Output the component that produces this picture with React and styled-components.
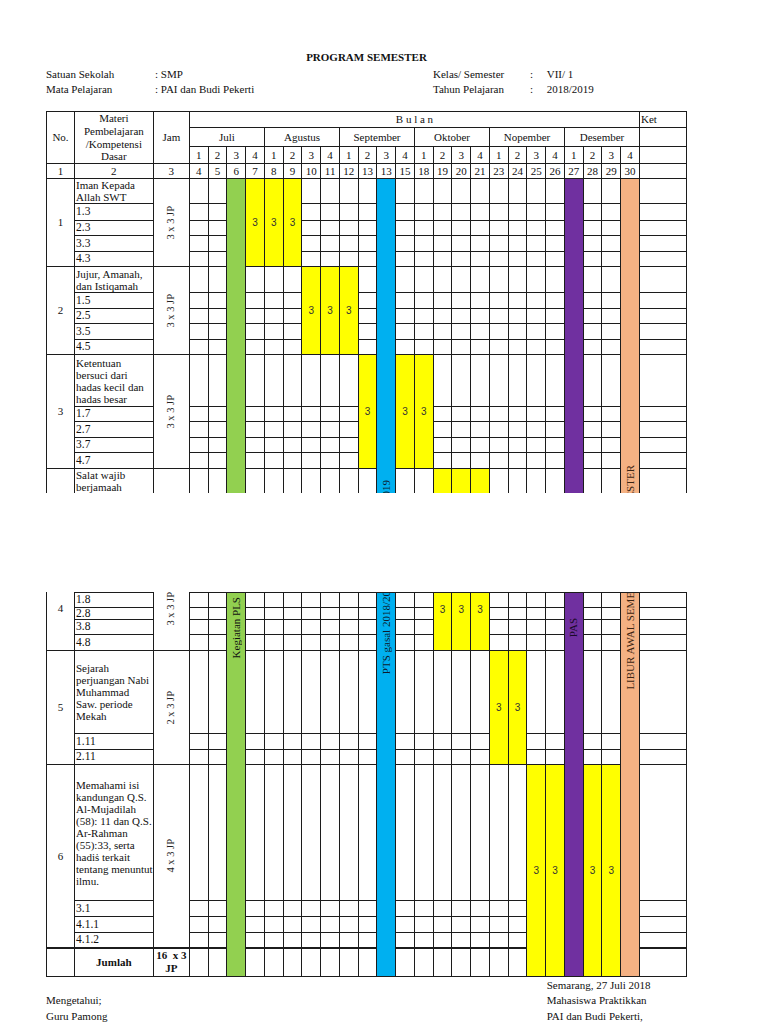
import React from "react";
import styled, { createGlobalStyle, css } from "styled-components";

const LINE = "#1c1c1c";

const MONTHS = ["Juli", "Agustus", "September", "Oktober", "Nopember", "Desember"];
const DATES = [4, 5, 6, 7, 8, 9, 10, 11, 12, 13, 13, 15, 18, 19, 20, 21, 23, 24, 25, 26, 27, 28, 29, 30];

const BANDS = [
  { week: 2, color: "#92d050", ink: "#111", label: "Kegiatan PLS" },
  { week: 10, color: "#00b0f0", ink: "#0d1b2c", label: "PTS gasal 2018/2019" },
  { week: 20, color: "#7030a0", ink: "#1a0a28", label: "PAS" },
  { week: 23, color: "#f4b183", ink: "#3a2412", label: "LIBUR AWAL SEMESTER" },
];
const bandWeeks = BANDS.map((b) => b.week);

// row track heights (px) for each printed page of the table
const PAGE1_ROWS = [15, 18, 16, 14, 24, 16, 14, 15, 14, 25, 15, 14, 15, 14, 51, 14, 15, 14, 15, 24];
const PAGE2_ROWS = [14, 11, 14, 15, 82, 15, 14, 135, 15, 15, 14, 28];

const spanHeight = (rows, from, to) =>
  rows.slice(from, to + 1).reduce((a, b) => a + b, 0) + (to - from);

const GROUPS = [
  {
    no: "1",
    title: ["Iman Kepada", "Allah SWT"],
    subs: ["1.3", "2.3", "3.3", "4.3"],
    jam: "3 x 3 JP",
    marks: [3, 4, 5],
  },
  {
    no: "2",
    title: ["Jujur, Amanah,", "dan Istiqamah"],
    subs: ["1.5", "2.5", "3.5", "4.5"],
    jam: "3 x 3 JP",
    marks: [6, 7, 8],
  },
  {
    no: "3",
    title: ["Ketentuan", "bersuci dari", "hadas kecil dan", "hadas besar"],
    subs: ["1.7", "2.7", "3.7", "4.7"],
    jam: "3 x 3 JP",
    marks: [9, 11, 12],
  },
  {
    no: "4",
    title: ["Salat wajib", "berjamaah"],
    subs: ["1.8", "2.8", "3.8", "4.8"],
    jam: "3 x 3 JP",
    marks: [13, 14, 15],
  },
  {
    no: "5",
    title: ["Sejarah", "perjuangan Nabi", "Muhammad", "Saw. periode", "Mekah"],
    subs: ["1.11", "2.11"],
    jam: "2 x 3 JP",
    marks: [16, 17],
  },
  {
    no: "6",
    title: [
      "Memahami  isi",
      "kandungan Q.S.",
      "Al-Mujadilah",
      "(58): 11 dan Q.S.",
      "Ar-Rahman",
      "(55):33, serta",
      "hadiṡ terkait",
      "tentang menuntut",
      "ilmu.",
    ],
    subs: ["3.1", "4.1.1", "4.1.2"],
    jam: "4 x 3 JP",
    marks: [18, 19, 21, 22],
  },
];

const GlobalStyle = createGlobalStyle`
  html, body { margin: 0; padding: 0; background: #fff; }
  body {
    font-family: "Liberation Serif", "Times New Roman", serif;
    font-size: 11px;
    color: #111;
  }
`;

const Sheet = styled.div`
  width: 768px;
  padding: 50px 0 0 46px;
  box-sizing: border-box;
`;

const Title = styled.div`
  width: 641px;
  text-align: center;
  font-weight: bold;
  line-height: 14px;
`;

const InfoBar = styled.div`
  display: flex;
  margin-top: 2px;
`;

const InfoBlock = styled.div`
  display: grid;
  grid-template-columns: ${(p) => p.$cols};
  grid-auto-rows: 15px;
  align-items: center;
  width: ${(p) => p.$width || "auto"};
  white-space: nowrap;
`;

const Table = styled.div`
  display: grid;
  grid-template-columns: 27px 77.7px 35.3px repeat(24, 17.75px) 46px;
  grid-template-rows: ${(p) => p.$rows};
  gap: 1px;
  padding: 1px 1px ${(p) => (p.$open ? 0 : 1)}px 1px;
  background: ${LINE};
  width: max-content;
  margin-top: ${(p) => p.$top}px;
`;

// grid placement taken from the table data
const place = css`
  grid-column: ${(p) => p.$col} / span ${(p) => p.$cols || 1};
  grid-row: ${(p) => p.$row} / span ${(p) => p.$rows || 1};
`;

const Cell = styled.div`
  ${place}
  background: ${(p) => p.$bg || "#fff"};
  overflow: hidden;
  display: flex;
  align-items: center;
  justify-content: ${(p) => (p.$left ? "flex-start" : "center")};
  padding-left: ${(p) => (p.$left ? 1 : 0)}px;
  text-align: center;
  line-height: 1.15;
  white-space: nowrap;
  font-weight: ${(p) => (p.$bold ? "bold" : "normal")};
  ${(p) => p.$noTop && "margin-top: -1px;"}
  ${(p) => p.$thick && `box-shadow: inset 0 1px 0 ${LINE};`}
`;

const ClipCell = styled(Cell)`
  align-items: flex-start;
`;

const HeadStack = styled.div`
  line-height: 12.6px;
`;

const TopicCell = styled.div`
  ${place}
  background: #fff;
  overflow: hidden;
  display: flex;
  flex-direction: column;
  justify-content: ${(p) => (p.$top ? "flex-start" : "center")};
  padding-left: 1px;
  line-height: 12px;
  white-space: nowrap;
`;

const LabelCell = styled.div`
  ${place}
  background: #fff;
  display: flex;
  align-items: center;
  padding-left: 1px;
  line-height: 1;
  font-size: 11.5px;
`;

const SliceBody = styled.div`
  flex: none;
  width: 100%;
  display: flex;
  align-items: center;
  justify-content: center;
`;

const Vertical = styled.span`
  writing-mode: vertical-rl;
  transform: rotate(180deg);
  white-space: nowrap;
  line-height: 1;
  font-size: ${(p) => p.$size || 11}px;
  color: ${(p) => p.$ink || "#111"};
`;

const MarkDigit = styled.span`
  font-family: "Liberation Sans", Arial, sans-serif;
  font-size: 10px;
  color: #333;
`;

const Footer = styled.div`
  display: grid;
  grid-template-columns: 500.7px auto;
  grid-auto-rows: 15.5px;
  align-items: center;
  white-space: nowrap;
`;

// a cell split over the page break shows its part of one taller virtual cell
function Slice({ total, offset, children }) {
  return <SliceBody style={{ height: total, marginTop: -offset }}>{children}</SliceBody>;
}

function headerCells() {
  const out = [
    <Cell key="no" $col={1} $row={1} $rows={3}>No.</Cell>,
    <Cell key="materi" $col={2} $row={1} $rows={3}>
      <HeadStack>
        Materi
        <br />
        Pembelajaran
        <br />
        /Kompetensi
        <br />
        Dasar
      </HeadStack>
    </Cell>,
    <Cell key="jam" $col={3} $row={1} $rows={3}>Jam</Cell>,
    <Cell key="bulan" $col={4} $cols={24} $row={1}>B u l a n</Cell>,
    <Cell key="ket" $left $col={28} $row={1}>Ket</Cell>,
  ];
  MONTHS.forEach((m, i) =>
    out.push(
      <Cell key={"m" + i} $col={4 + i * 4} $cols={4} $row={2}>
        {m}
      </Cell>
    )
  );
  out.push(<Cell key="ket2" $col={28} $row={2} />);
  for (let i = 0; i < 24; i++) {
    out.push(
      <Cell key={"w" + i} $col={4 + i} $row={3}>
        {(i % 4) + 1}
      </Cell>
    );
  }
  out.push(<Cell key="ket3" $col={28} $row={3} />);
  ["1", "2", "3"].forEach((t, i) =>
    out.push(
      <Cell key={"n" + i} $col={1 + i} $row={4}>
        {t}
      </Cell>
    )
  );
  DATES.forEach((d, i) =>
    out.push(
      <Cell key={"d" + i} $col={4 + i} $row={4}>
        {d}
      </Cell>
    )
  );
  out.push(<Cell key="ket4" $col={28} $row={4} />);
  return out;
}

function groupCells({ group, startRow, entries, slice, markExtra = 0, keyPrefix }) {
  const span = entries.length;
  const k = (s) => `${keyPrefix}-${s}`;
  const cont = slice && slice.offset > 0;
  const wrap = (content) =>
    slice ? (
      <Slice total={slice.total} offset={slice.offset}>
        {content}
      </Slice>
    ) : (
      content
    );
  const SpanCell = slice ? ClipCell : Cell;
  const out = [];

  out.push(
    <SpanCell key={k("no")} $noTop={cont} $col={1} $row={startRow} $rows={span}>
      {wrap(<span>{group.no}</span>)}
    </SpanCell>
  );

  entries.forEach((e, r) => {
    out.push(
      e.title ? (
        <TopicCell key={k("t" + r)} $top={e.top} $col={2} $row={startRow + r}>
          {e.title.map((line, j) => (
            <span key={j}>{line}</span>
          ))}
        </TopicCell>
      ) : (
        <LabelCell key={k("t" + r)} $col={2} $row={startRow + r}>
          {e.label}
        </LabelCell>
      )
    );
  });

  out.push(
    <SpanCell key={k("jam")} $noTop={cont} $col={3} $row={startRow} $rows={span}>
      {wrap(
        <Vertical $size={10.5} $ink="#222">
          {group.jam}
        </Vertical>
      )}
    </SpanCell>
  );

  for (let i = 0; i < 24; i++) {
    if (bandWeeks.includes(i)) continue;
    if (group.marks.includes(i)) {
      out.push(
        <SpanCell key={k("y" + i)} $bg="#ffff00" $col={4 + i} $row={startRow} $rows={span + markExtra}>
          {wrap(<MarkDigit>3</MarkDigit>)}
        </SpanCell>
      );
    } else {
      for (let r = 0; r < span; r++) {
        out.push(<Cell key={k(`c${i}-${r}`)} $col={4 + i} $row={startRow + r} />);
      }
    }
  }

  for (let r = 0; r < span; r++) {
    out.push(<Cell key={k("ket" + r)} $col={28} $row={startRow + r} />);
  }
  return out;
}

function bandCells({ startRow, span, total, offset, keyPrefix }) {
  return BANDS.map((b) => (
    <ClipCell key={`${keyPrefix}-band${b.week}`} $bg={b.color} $col={4 + b.week} $row={startRow} $rows={span}>
      <Slice total={total} offset={offset}>
        <Vertical $ink={b.ink}>{b.label}</Vertical>
      </Slice>
    </ClipCell>
  ));
}

function jumlahCells(row, skip) {
  const out = [
    <Cell key="j-no" $thick $col={1} $row={row} />,
    <Cell key="j-m" $thick $bold $col={2} $row={row}>
      Jumlah
    </Cell>,
    <Cell key="j-jam" $thick $bold $col={3} $row={row}>
      <HeadStack>
        16&nbsp; x 3
        <br />
        JP
      </HeadStack>
    </Cell>,
  ];
  for (let i = 0; i < 24; i++) {
    if (bandWeeks.includes(i) || skip.includes(i)) continue;
    out.push(<Cell key={"j-w" + i} $thick $col={4 + i} $row={row} />);
  }
  out.push(<Cell key="j-ket" $thick $col={28} $row={row} />);
  return out;
}

const subEntries = (g) => g.subs.map((label) => ({ label }));
const fullEntries = (g) => [{ title: g.title }, ...subEntries(g)];
const trackList = (rows) => rows.map((h) => h + "px").join(" ");

export default function App() {
  const [g1, g2, g3, g4, g5, g6] = GROUPS;

  const bandTop = spanHeight(PAGE1_ROWS, 4, PAGE1_ROWS.length - 1);
  const bandBottom = spanHeight(PAGE2_ROWS, 0, PAGE2_ROWS.length - 1);
  const bandTotal = bandTop + bandBottom;

  const g4Top = PAGE1_ROWS[PAGE1_ROWS.length - 1];
  const g4Total = g4Top + spanHeight(PAGE2_ROWS, 0, 3);

  const page1 = [
    ...headerCells(),
    ...groupCells({ group: g1, startRow: 5, entries: fullEntries(g1), keyPrefix: "g1" }),
    ...groupCells({ group: g2, startRow: 10, entries: fullEntries(g2), keyPrefix: "g2" }),
    ...groupCells({ group: g3, startRow: 15, entries: fullEntries(g3), keyPrefix: "g3" }),
    ...groupCells({
      group: g4,
      startRow: 20,
      entries: [{ title: g4.title, top: true }],
      slice: { total: g4Total, offset: 0 },
      keyPrefix: "g4a",
    }),
    ...bandCells({ startRow: 5, span: 16, total: bandTotal, offset: 0, keyPrefix: "p1" }),
  ];

  const page2 = [
    ...groupCells({
      group: g4,
      startRow: 1,
      entries: subEntries(g4),
      slice: { total: g4Total, offset: g4Top },
      keyPrefix: "g4b",
    }),
    ...groupCells({ group: g5, startRow: 5, entries: fullEntries(g5), keyPrefix: "g5" }),
    ...groupCells({ group: g6, startRow: 8, entries: fullEntries(g6), markExtra: 1, keyPrefix: "g6" }),
    ...jumlahCells(12, g6.marks),
    ...bandCells({ startRow: 1, span: 12, total: bandTotal, offset: bandTop, keyPrefix: "p2" }),
  ];

  return (
    <>
      <GlobalStyle />
      <Sheet>
        <Title>PROGRAM SEMESTER</Title>
        <InfoBar>
          <InfoBlock $cols="109px auto" $width="387px">
            <span>Satuan Sekolah</span>
            <span>: SMP</span>
            <span>Mata Pelajaran</span>
            <span>: PAI dan Budi Pekerti</span>
          </InfoBlock>
          <InfoBlock $cols="97px 16.7px auto">
            <span>Kelas/ Semester</span>
            <span>:</span>
            <span>VII/ 1</span>
            <span>Tahun Pelajaran</span>
            <span>:</span>
            <span>2018/2019</span>
          </InfoBlock>
        </InfoBar>

        <Table $top={15} $open $rows={trackList(PAGE1_ROWS)}>
          {page1}
        </Table>

        <Table $top={99} $rows={trackList(PAGE2_ROWS)}>
          {page2}
        </Table>

        <Footer>
          <span />
          <span>Semarang, 27 Juli 2018</span>
          <span>Mengetahui;</span>
          <span>Mahasiswa Praktikkan</span>
          <span>Guru Pamong</span>
          <span>PAI dan Budi Pekerti,</span>
        </Footer>
      </Sheet>
    </>
  );
}
